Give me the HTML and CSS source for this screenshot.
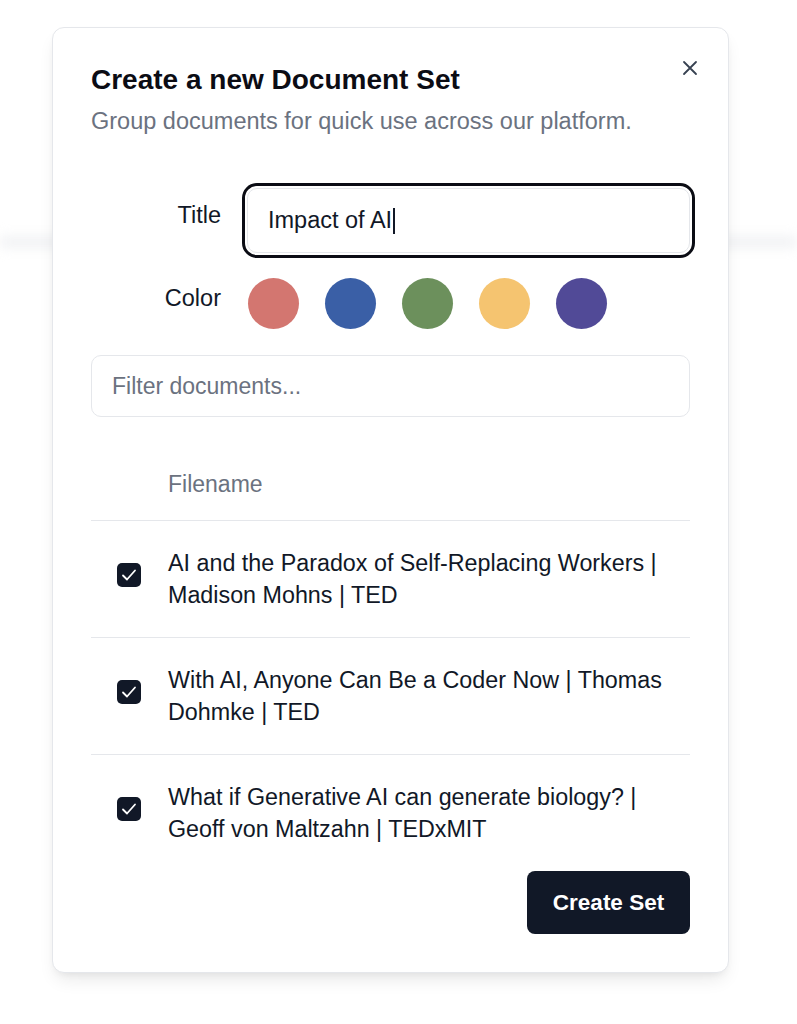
FILE: index.html
```html
<!DOCTYPE html>
<html lang="en">
<head>
<meta charset="utf-8">
<title>Create a new Document Set</title>
<link rel="stylesheet" href="styles.css">
</head>
<body>
<div class="backdrop-band"></div>
<div class="dialog">
  <button class="close" aria-label="Close">
    <svg width="18" height="18" viewBox="0 0 18 18" fill="none" stroke="#374151" stroke-width="1.8" stroke-linecap="round"><path d="M3 3L15 15M15 3L3 15"/></svg>
  </button>
  <h1 class="heading">Create a new Document Set</h1>
  <p class="subtitle">Group documents for quick use across our platform.</p>

  <div class="form">
    <label class="label">Title</label>
    <div class="title-input">Impact of AI<span class="caret"></span></div>

    <label class="label">Color</label>
    <div class="swatches">
      <span class="swatch red"></span>
      <span class="swatch blue"></span>
      <span class="swatch green"></span>
      <span class="swatch yellow"></span>
      <span class="swatch purple"></span>
    </div>
  </div>

  <div class="filter">Filter documents...</div>

  <div class="table">
    <div class="thead">
      <div class="cell-check"></div>
      <div class="th">Filename</div>
    </div>
    <div class="row">
      <div class="cell-check"><span class="checkbox"><svg width="24" height="24" viewBox="0 0 24 24" fill="none" stroke="#fff" stroke-width="1.8" stroke-linecap="round" stroke-linejoin="round"><path d="M6 12.5L10 16.5L18 7.5"/></svg></span></div>
      <div class="name">AI and the Paradox of Self-Replacing Workers | Madison Mohns | TED</div>
    </div>
    <div class="row">
      <div class="cell-check"><span class="checkbox"><svg width="24" height="24" viewBox="0 0 24 24" fill="none" stroke="#fff" stroke-width="1.8" stroke-linecap="round" stroke-linejoin="round"><path d="M6 12.5L10 16.5L18 7.5"/></svg></span></div>
      <div class="name">With AI, Anyone Can Be a Coder Now | Thomas Dohmke | TED</div>
    </div>
    <div class="row last">
      <div class="cell-check"><span class="checkbox"><svg width="24" height="24" viewBox="0 0 24 24" fill="none" stroke="#fff" stroke-width="1.8" stroke-linecap="round" stroke-linejoin="round"><path d="M6 12.5L10 16.5L18 7.5"/></svg></span></div>
      <div class="name">What if Generative AI can generate biology? | Geoff von Maltzahn | TEDxMIT</div>
    </div>
  </div>

  <div class="actions">
    <button class="primary">Create Set</button>
  </div>
</div>
</body>
</html>
```

FILE: styles.css
```css
html, body {
  margin: 0;
  padding: 0;
  background: #ffffff;
}
body {
  font-family: "Liberation Sans", Arial, sans-serif;
  color: #111827;
  position: relative;
  min-height: 1024px;
  padding-top: 27px;
  box-sizing: border-box;
}
.backdrop-band {
  position: absolute;
  left: 0;
  right: 0;
  top: 236px;
  height: 12px;
  background: #f1f2f4;
  filter: blur(6px);
  z-index: 0;
}
.dialog {
  position: relative;
  z-index: 1;
  margin-left: 52px;
  width: 677px;
  box-sizing: border-box;
  background: #fff;
  border: 1px solid #e5e7eb;
  border-radius: 12px;
  padding: 34px 38px 38px;
  box-shadow: 0 10px 18px -4px rgba(0,0,0,0.09), 0 4px 8px -4px rgba(0,0,0,0.08);
}
.close {
  position: absolute;
  top: 31px;
  right: 29px;
  width: 18px;
  height: 18px;
  padding: 0;
  border: 0;
  background: none;
  display: flex;
}
.heading {
  margin: 0;
  font-size: 28px;
  line-height: 36px;
  font-weight: 700;
  color: #0b0c14;
}
.subtitle {
  margin: 7px 0 0;
  font-size: 23.5px;
  line-height: 32px;
  color: #6b7280;
}
.form {
  margin-top: 51px;
  display: grid;
  grid-template-columns: 130px 1fr;
  column-gap: 26px;
  row-gap: 25px;
  align-items: center;
}
.label {
  font-size: 23.5px;
  line-height: 32px;
  text-align: right;
  color: #111827;
  margin-bottom: 12px;
}
.title-input {
  height: 65px;
  box-sizing: border-box;
  border: 1.5px solid #e5e7eb;
  border-radius: 10px;
  outline: 3px solid #0b0c14;
  outline-offset: 2px;
  padding: 0 20px;
  display: flex;
  align-items: center;
  font-size: 23.5px;
  color: #111827;
}
.caret {
  display: inline-block;
  width: 1.5px;
  height: 26px;
  background: #111827;
  margin-left: 1px;
}
.swatches {
  display: flex;
  gap: 26px;
  padding-left: 1px;
}
.swatch {
  width: 51px;
  height: 51px;
  border-radius: 50%;
  display: block;
}
.red { background: #d37670; }
.blue { background: #3a5fa6; }
.green { background: #6c905c; }
.yellow { background: #f5c470; }
.purple { background: #514a97; }

.filter {
  margin-top: 26px;
  height: 62px;
  box-sizing: border-box;
  border: 1.5px solid #e5e7eb;
  border-radius: 10px;
  padding: 0 20px;
  display: flex;
  align-items: center;
  font-size: 23px;
  color: #6b7280;
}
.table {
  margin-top: 30px;
}
.thead {
  display: flex;
  align-items: center;
  height: 73px;
  border-bottom: 1px solid #e5e7eb;
}
.cell-check {
  width: 77px;
  flex: none;
  padding-left: 26px;
  box-sizing: border-box;
  display: flex;
}
.th {
  font-size: 23px;
  line-height: 32px;
  color: #6b7280;
  font-weight: 500;
}
.row {
  display: flex;
  align-items: center;
  padding: 26px 0;
  border-bottom: 1px solid #e5e7eb;
}
.row.last {
  border-bottom: 0;
}
.checkbox {
  width: 24px;
  height: 24px;
  border-radius: 5px;
  background: #111827;
  display: flex;
  align-items: center;
  justify-content: center;
  margin-bottom: 8px;
}
.name {
  font-size: 23.3px;
  line-height: 32px;
  color: #111827;
  max-width: 505px;
}
.actions {
  display: flex;
  justify-content: flex-end;
}
.primary {
  width: 163px;
  height: 63px;
  border: 0;
  border-radius: 8px;
  background: #111827;
  color: #fff;
  font-family: "Liberation Sans", Arial, sans-serif;
  font-size: 22.5px;
  font-weight: 700;
}
```
